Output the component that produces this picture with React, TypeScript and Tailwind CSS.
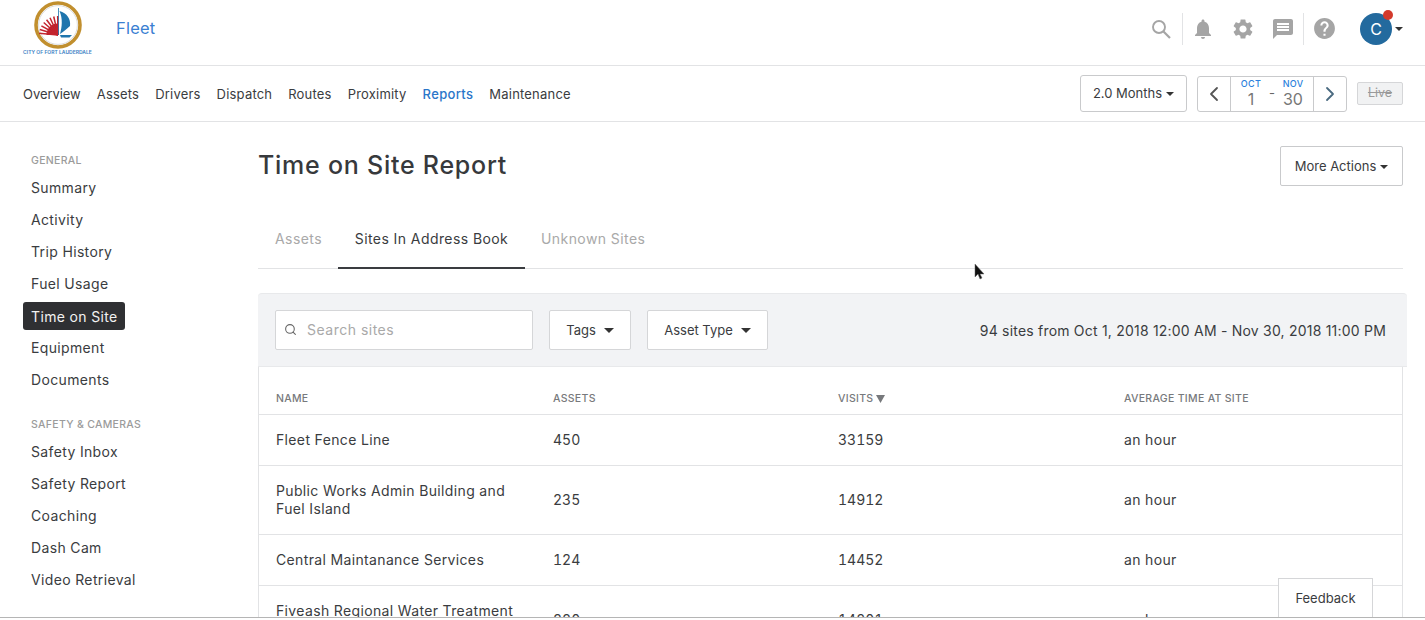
import React from "react";
import { MdNotifications, MdSettings, MdMessage, MdHelp } from "react-icons/md";
import { ChevronLeft, ChevronRight, Search } from "lucide-react";

const Caret = ({ w = 4 }: { w?: number }) => (
  <svg width={w * 2} height={w} viewBox="0 0 8 4" className="shrink-0"><path d="M0 0h8L4 4z" fill="#333" /></svg>
);

const rays = [185, 197, 209, 221, 233, 245, 257, 269];

const Logo = () => (
  <div className="flex flex-col items-center w-[69px]">
    <svg width="48" height="48" viewBox="0 0 48 48">
      <circle cx="24" cy="24" r="22" fill="#fff" stroke="#c18f2e" strokeWidth="3.6" />
      <circle cx="24" cy="24" r="19.4" fill="none" stroke="#dcdcdc" strokeWidth="1" />
      <path d="M24 34H12.5A11.5 11.5 0 0 1 24 22.5z" fill="#b5202e" />
      {rays.map((a) => (
        <line key={a} x1="24" y1="34" x2={24 + 19 * Math.cos((a * Math.PI) / 180)} y2={34 + 19 * Math.sin((a * Math.PI) / 180)} stroke="#c4252f" strokeWidth="1.5" />
      ))}
      <line x1="24.5" y1="7" x2="24.5" y2="34" stroke="#1f75ad" strokeWidth="0.8" />
      <path d="M25.5 10C33 12 37 18 36 25c-3 3-6 5-10 8 2-7 3-15-.5-23z" fill="#1f75ad" />
      <path d="M26 34h12l-2.5 2.5H27z" fill="#1f75ad" />
    </svg>
    <span className="text-[5px] leading-[8px] mt-[-1px] whitespace-nowrap text-[#3b7fc4] font-semibold">CITY OF FORT LAUDERDALE</span>
  </div>
);

const Nav = ["Overview", "Assets", "Drivers", "Dispatch", "Routes", "Proximity", "Reports", "Maintenance"];
const General = ["Summary", "Activity", "Trip History", "Fuel Usage", "Time on Site", "Equipment", "Documents"];
const Safety = ["Safety Inbox", "Safety Report", "Coaching", "Dash Cam", "Video Retrieval"];

const SideItem = ({ t }: { t: string }) => {
  const active = t === "Time on Site";
  return (
    <div className="h-8 flex items-center">
      <span className={active ? "bg-[#2f3033] text-[#f2f2f2] rounded-[3px] pl-2 pr-2 h-7 mt-[2px] flex items-center w-[102px] whitespace-nowrap" : "pl-2 text-[#3a3c40]"}>{t}</span>
    </div>
  );
};

const Rows = [
  { n: "Fleet Fence Line", a: "450", v: "33159", h: "h-[51px]" },
  { n: "Public Works Admin Building and Fuel Island", a: "235", v: "14912", h: "h-[69px]" },
  { n: "Central Maintanance Services", a: "124", v: "14452", h: "h-[51px]" },
  { n: "Fiveash Regional Water Treatment Plant", a: "280", v: "14201", h: "h-[69px]" },
];

const cols = "grid grid-cols-[277px_285px_286px_1fr] pl-[17px]";

export default function App() {
  return (
    <div className="relative w-[1425px] h-[620px] overflow-hidden bg-white text-[#3a3c40]" style={{ fontFamily: "Inter, 'Liberation Sans', sans-serif" }}>
      {/* top header */}
      <header className="h-[66px] border-b border-[#e2e3e5] flex items-center pl-[23px] pr-[22px] pb-[8px]">
        <Logo />
        <span className="ml-[24px] text-[#3a80d2] text-[16.5px] tracking-[0.2px]">Fleet</span>
        <div className="ml-auto flex items-center text-[#a5a5a5]">
          <svg width="20" height="20" viewBox="0 0 20 20" fill="none" stroke="#a5a5a5" strokeWidth="1.9" className="mr-[11px]">
            <circle cx="8" cy="8" r="6" />
            <path d="M12.5 12.5 19 19" strokeWidth="2.2" />
          </svg>
          <div className="w-px h-8 bg-[#e2e3e5] mr-[8px]" />
          <MdNotifications size={24} className="mr-[16px]" />
          <MdSettings size={24} className="mr-[16px]" />
          <MdMessage size={24} className="mr-[8px]" />
          <div className="w-px h-8 bg-[#e2e3e5] mr-[8px]" />
          <MdHelp size={25} className="mr-[23px]" />
          <div className="relative w-8 h-8 rounded-full bg-[#236a9e] text-white flex items-center justify-center text-[16px]">
            C
            <span className="absolute -top-[3px] -right-[1px] w-[10px] h-[10px] rounded-full bg-[#d33a2c]" />
          </div>
          <div className="ml-[3px]"><Caret /></div>
        </div>
      </header>

      {/* sub nav */}
      <div className="h-[56px] border-b border-[#e2e3e5] flex items-center pl-[23px] pr-[22px]">
        <nav className="flex gap-[16px] text-[13px] tracking-[0.2px] pt-[2px]">
          {Nav.map((n) => (
            <span key={n} className={n === "Reports" ? "text-[#2a76c9] font-medium tracking-[0.35px]" : n === "Overview" ? "text-[#3a3c40] tracking-[-0.05px]" : "text-[#3a3c40]"}>{n}</span>
          ))}
        </nav>
        <div className="ml-auto flex items-center">
          <button className="w-[107px] h-[37px] border border-[#c9cacc] rounded-[3px] flex items-center justify-center gap-1 text-[13px]">2.0 Months <Caret /></button>
          <div className="ml-[10px] w-[150px] h-[36px] border border-[#c9cacc] rounded-[3px] flex items-stretch">
            <div className="w-[33px] flex items-center justify-center border-r border-[#c9cacc]"><ChevronLeft size={24} strokeWidth={1.8} className="text-[#555]" /></div>
            <div className="flex-1 flex items-center justify-center gap-[3px]">
              <div className="flex flex-col items-center w-[30px]">
                <span className="text-[9px] leading-[10px] font-medium text-[#2a7fdc] tracking-[0.3px]">OCT</span>
                <span className="text-[16px] leading-[20px] text-[#777]">1</span>
              </div>
              <span className="text-[#666] text-[13px] leading-none">-</span>
              <div className="flex flex-col items-center w-[30px]">
                <span className="text-[9px] leading-[10px] font-medium text-[#2a7fdc] tracking-[0.3px]">NOV</span>
                <span className="text-[16px] leading-[20px] text-[#777]">30</span>
              </div>
            </div>
            <div className="w-[33px] flex items-center justify-center border-l border-[#c9cacc]"><ChevronRight size={24} strokeWidth={1.8} className="text-[#4a6a80]" /></div>
          </div>
          <div className="ml-[10px] w-[46px] h-[23px] border border-[#d5d6d8] bg-[#f1f2f3] rounded-[2px] flex items-center justify-center text-[12.5px] text-[#9a9a9a] line-through">Live</div>
        </div>
      </div>

      <div className="flex">
        {/* sidebar */}
        <aside className="w-[258px] shrink-0 pl-[23px] pt-[31px] text-[14px] tracking-[0.35px]">
          <div className="pl-2 text-[10.5px] leading-[16px] text-[#9b9b9b] font-medium tracking-[0.3px] mb-[2px]">GENERAL</div>
          {General.map((t) => <SideItem key={t} t={t} />)}
          <div className="pl-2 mt-[22px] text-[10.5px] leading-[16px] text-[#9b9b9b] font-medium tracking-[0.3px] mb-[2px]">SAFETY &amp; CAMERAS</div>
          {Safety.map((t) => <SideItem key={t} t={t} />)}
        </aside>

        {/* main */}
        <main className="w-[1145px] shrink-0">
          <div className="h-[85px] flex items-start justify-between pt-[24px]">
            <h1 className="text-[25px] leading-[38px] font-medium text-[#37393c] tracking-[0.75px]">Time on Site Report</h1>
            <button className="w-[123px] h-[40px] border border-[#c9cacc] rounded-[2px] flex items-center justify-center gap-1 text-[13px] pt-[1px]">More Actions <Caret /></button>
          </div>
          <div className="h-[62px] border-b border-[#e2e3e5] flex text-[14px] tracking-[0.42px]">
            <span className="w-[80px] flex items-center pl-[17px] pt-[2px] text-[#a9a9a9] whitespace-nowrap">Assets</span>
            <span className="w-[187px] flex items-center justify-center pt-[2px] text-[#3a3c40] border-b-2 border-[#3a3c40] h-[62px]">Sites In Address Book</span>
            <span className="pl-[16px] flex items-center pt-[2px] text-[#a9a9a9]">Unknown Sites</span>
          </div>

          <div className="mt-[24px] w-[1149px] h-[74px] bg-[#f2f3f5] border-t border-b border-[#e8e9eb] rounded-t-[4px] flex items-center pl-[17px] pr-[21px]">
            <div className="w-[258px] h-[40px] bg-white border border-[#d5d6d8] rounded-[2px] flex items-center pl-[8px] pb-[1px] text-[14px] tracking-[0.5px] text-[#a9a9a9]">
              <Search size={13} strokeWidth={2} className="text-[#666] mr-[10px]" />
              Search sites
            </div>
            <button className="ml-[16px] w-[82px] h-[40px] bg-white border border-[#d5d6d8] rounded-[2px] flex items-center justify-center gap-[8px] text-[13px] pt-[1px]">Tags <Caret w={5} /></button>
            <button className="ml-[16px] w-[121px] h-[40px] bg-white border border-[#d5d6d8] rounded-[2px] flex items-center justify-center gap-[8px] text-[13px] pt-[1px]">Asset Type <Caret w={5} /></button>
            <span className="ml-auto text-[14px] tracking-[0.21px] text-[#3a3c40]">94 sites from Oct 1, 2018 12:00 AM - Nov 30, 2018 11:00 PM</span>
          </div>

          <div className="border-l border-r border-[#e2e3e5]">
            <div className={`${cols} h-[48px] items-end pb-[7px] border-b border-[#e2e3e5] text-[10.5px] leading-[16px] font-medium text-[#77797c] tracking-[0.3px]`}>
              <span>NAME</span>
              <span>ASSETS</span>
              <span className="flex items-center gap-[3px]">VISITS <svg width="9" height="8" viewBox="0 0 9 8"><path d="M0 0h9L4.5 8z" fill="#77797c" /></svg></span>
              <span>AVERAGE TIME AT SITE</span>
            </div>
            {Rows.map((r) => (
              <div key={r.n} className={`${cols} ${r.h} items-center border-b border-[#e2e3e5] text-[14px] leading-[18px] tracking-[0.35px]`}>
                <span className="w-[245px]">{r.n}</span>
                <span className="tabular-nums tracking-[0px]">{r.a}</span>
                <span className="tabular-nums tracking-[0px]">{r.v}</span>
                <span>an hour</span>
              </div>
            ))}
          </div>
        </main>
      </div>

      {/* overlays */}
      <button className="absolute left-[1278px] top-[578px] w-[95px] h-[40px] pt-[1px] bg-white border border-[#d5d6d8] text-[13px] text-[#3a3c40]">Feedback</button>
      <div className="absolute left-0 right-0 top-[617px] h-[3px] bg-white border-t border-[#b5b5b5]" />
      <svg className="absolute left-[974px] top-[263px]" width="12" height="18" viewBox="0 0 12 18"><path d="M1 1v13l3-3 2 5 2-1-2-4h4z" fill="#111" stroke="#666" strokeWidth=".5" /></svg>
    </div>
  );
}
